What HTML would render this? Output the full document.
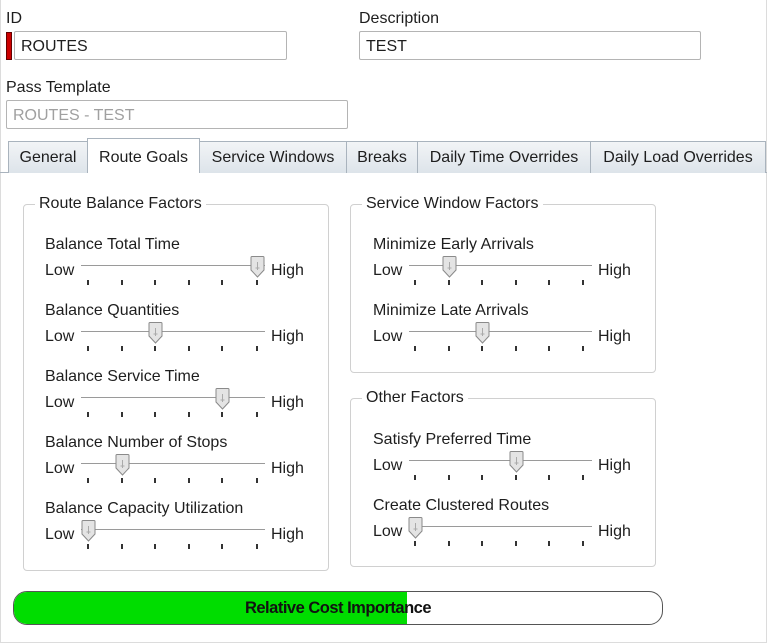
<!DOCTYPE html>
<html><head><style>
*{margin:0;padding:0;box-sizing:border-box}
body{width:768px;height:644px;background:#fff;font-family:"Liberation Sans",sans-serif;font-size:16px;color:#1e1e1e;position:relative;overflow:hidden}
.a{position:absolute;white-space:nowrap;margin-top:1px}
.inp{position:absolute;border:1px solid #b4b4b4;border-radius:2px;background:#fff;padding-left:6px;line-height:30px;height:29px}
.tab{position:absolute;top:141px;height:32px;border:1px solid #a9b3bd;border-bottom:none;background:linear-gradient(#f2f4f6,#dde4ea);text-align:center;line-height:32px}
.grp{position:absolute;border:1px solid #d0d0d0;border-radius:4px}
.gt{position:absolute;background:#fff;padding:0 4px;top:-11px;line-height:20px}
.trk{position:absolute;height:1px;background:#9a9a9a}
.tk{position:absolute;width:2px;height:5px;background:#333}
.th{position:absolute;width:15px;height:22px}
</style></head><body>
<div style="position:absolute;left:0;top:0;width:767px;height:643px;border:1px solid #dcdcdc;border-top:none"></div>
<div class="a" style="left:6px;top:9px">ID</div>
<div style="position:absolute;left:6px;top:32px;width:6px;height:28px;background:#c00;border:1px solid #600"></div>
<div class="inp" style="left:14px;top:31px;width:273px">ROUTES</div>
<div class="a" style="left:359px;top:9px">Description</div>
<div class="inp" style="left:359px;top:31px;width:342px">TEST</div>
<div class="a" style="left:6px;top:78px">Pass Template</div>
<div class="inp" style="left:6px;top:100px;width:342px;color:#a0a0a0">ROUTES - TEST</div>

<div style="position:absolute;left:0;top:172px;width:767px;height:1px;background:#a9b3bd"></div>
<div class="tab" style="left:8px;width:80px">General</div>
<div class="tab" style="left:87px;width:113px;top:138px;height:35px;background:#fff;line-height:37px">Route Goals</div>
<div class="tab" style="left:199px;width:148px">Service Windows</div>
<div class="tab" style="left:346px;width:72px">Breaks</div>
<div class="tab" style="left:417px;width:174px">Daily Time Overrides</div>
<div class="tab" style="left:590px;width:176px">Daily Load Overrides</div>
<div style="position:absolute;left:88px;top:172px;width:111px;height:2px;background:#fff"></div>

<div class="grp" style="left:23px;top:204px;width:306px;height:367px"><div class="gt" style="left:11px">Route Balance Factors</div></div>
<div class="grp" style="left:350px;top:204px;width:306px;height:169px"><div class="gt" style="left:11px">Service Window Factors</div></div>
<div class="grp" style="left:350px;top:398px;width:306px;height:169px"><div class="gt" style="left:11px">Other Factors</div></div>

<svg width="0" height="0" style="position:absolute"><defs><g id="t"><path d="M1 1.5 Q1 .5 2 .5 H13 Q14 .5 14 1.5 V14 L7.5 21 L1 14 Z" fill="#e4e4e4" stroke="#8a8a8a"/><path d="M7.5 6 V14 M5.5 12 H9.5" stroke="#aaa" fill="none"/></g></defs></svg>

<!-- left sliders -->
<div class="a" style="left:45px;top:235px">Balance Total Time</div>
<div class="a" style="left:45px;top:261px">Low</div><div class="a" style="left:271px;top:261px">High</div>
<div class="trk" style="left:81px;top:265px;width:184px"></div>
<div class="tk" style="left:87px;top:280px"></div><div class="tk" style="left:121px;top:280px"></div><div class="tk" style="left:154px;top:280px"></div><div class="tk" style="left:188px;top:280px"></div><div class="tk" style="left:221px;top:280px"></div><div class="tk" style="left:256px;top:280px"></div>
<svg class="th" style="left:250px;top:256px"><use href="#t"/></svg>

<div class="a" style="left:45px;top:301px">Balance Quantities</div>
<div class="a" style="left:45px;top:327px">Low</div><div class="a" style="left:271px;top:327px">High</div>
<div class="trk" style="left:81px;top:331px;width:184px"></div>
<div class="tk" style="left:87px;top:346px"></div><div class="tk" style="left:121px;top:346px"></div><div class="tk" style="left:154px;top:346px"></div><div class="tk" style="left:188px;top:346px"></div><div class="tk" style="left:221px;top:346px"></div><div class="tk" style="left:256px;top:346px"></div>
<svg class="th" style="left:148px;top:322px"><use href="#t"/></svg>

<div class="a" style="left:45px;top:367px">Balance Service Time</div>
<div class="a" style="left:45px;top:393px">Low</div><div class="a" style="left:271px;top:393px">High</div>
<div class="trk" style="left:81px;top:397px;width:184px"></div>
<div class="tk" style="left:87px;top:412px"></div><div class="tk" style="left:121px;top:412px"></div><div class="tk" style="left:154px;top:412px"></div><div class="tk" style="left:188px;top:412px"></div><div class="tk" style="left:221px;top:412px"></div><div class="tk" style="left:256px;top:412px"></div>
<svg class="th" style="left:215px;top:388px"><use href="#t"/></svg>

<div class="a" style="left:45px;top:433px">Balance Number of Stops</div>
<div class="a" style="left:45px;top:459px">Low</div><div class="a" style="left:271px;top:459px">High</div>
<div class="trk" style="left:81px;top:463px;width:184px"></div>
<div class="tk" style="left:87px;top:478px"></div><div class="tk" style="left:121px;top:478px"></div><div class="tk" style="left:154px;top:478px"></div><div class="tk" style="left:188px;top:478px"></div><div class="tk" style="left:221px;top:478px"></div><div class="tk" style="left:256px;top:478px"></div>
<svg class="th" style="left:115px;top:454px"><use href="#t"/></svg>

<div class="a" style="left:45px;top:499px">Balance Capacity Utilization</div>
<div class="a" style="left:45px;top:525px">Low</div><div class="a" style="left:271px;top:525px">High</div>
<div class="trk" style="left:81px;top:529px;width:184px"></div>
<div class="tk" style="left:87px;top:544px"></div><div class="tk" style="left:121px;top:544px"></div><div class="tk" style="left:154px;top:544px"></div><div class="tk" style="left:188px;top:544px"></div><div class="tk" style="left:221px;top:544px"></div><div class="tk" style="left:256px;top:544px"></div>
<svg class="th" style="left:81px;top:520px"><use href="#t"/></svg>

<!-- right sliders -->
<div class="a" style="left:373px;top:235px">Minimize Early Arrivals</div>
<div class="a" style="left:373px;top:261px">Low</div><div class="a" style="left:598px;top:261px">High</div>
<div class="trk" style="left:409px;top:265px;width:183px"></div>
<div class="tk" style="left:414px;top:280px"></div><div class="tk" style="left:448px;top:280px"></div><div class="tk" style="left:481px;top:280px"></div><div class="tk" style="left:515px;top:280px"></div><div class="tk" style="left:548px;top:280px"></div><div class="tk" style="left:582px;top:280px"></div>
<svg class="th" style="left:442px;top:256px"><use href="#t"/></svg>

<div class="a" style="left:373px;top:301px">Minimize Late Arrivals</div>
<div class="a" style="left:373px;top:327px">Low</div><div class="a" style="left:598px;top:327px">High</div>
<div class="trk" style="left:409px;top:331px;width:183px"></div>
<div class="tk" style="left:414px;top:346px"></div><div class="tk" style="left:448px;top:346px"></div><div class="tk" style="left:481px;top:346px"></div><div class="tk" style="left:515px;top:346px"></div><div class="tk" style="left:548px;top:346px"></div><div class="tk" style="left:582px;top:346px"></div>
<svg class="th" style="left:475px;top:322px"><use href="#t"/></svg>

<div class="a" style="left:373px;top:430px">Satisfy Preferred Time</div>
<div class="a" style="left:373px;top:456px">Low</div><div class="a" style="left:598px;top:456px">High</div>
<div class="trk" style="left:409px;top:460px;width:183px"></div>
<div class="tk" style="left:414px;top:475px"></div><div class="tk" style="left:448px;top:475px"></div><div class="tk" style="left:481px;top:475px"></div><div class="tk" style="left:515px;top:475px"></div><div class="tk" style="left:548px;top:475px"></div><div class="tk" style="left:582px;top:475px"></div>
<svg class="th" style="left:509px;top:451px"><use href="#t"/></svg>

<div class="a" style="left:373px;top:496px">Create Clustered Routes</div>
<div class="a" style="left:373px;top:522px">Low</div><div class="a" style="left:598px;top:522px">High</div>
<div class="trk" style="left:409px;top:526px;width:183px"></div>
<div class="tk" style="left:414px;top:541px"></div><div class="tk" style="left:448px;top:541px"></div><div class="tk" style="left:481px;top:541px"></div><div class="tk" style="left:515px;top:541px"></div><div class="tk" style="left:548px;top:541px"></div><div class="tk" style="left:582px;top:541px"></div>
<svg class="th" style="left:408px;top:517px"><use href="#t"/></svg>

<div style="position:absolute;left:13px;top:591px;width:650px;height:34px;border:1.5px solid #555;border-radius:14px;overflow:hidden;background:#fff">
<div style="position:absolute;left:0;top:0;width:393px;height:100%;background:#00dd00"></div>
<div style="position:absolute;left:0;top:0;width:100%;text-align:center;line-height:32px;font-weight:bold;font-size:16.5px;color:#111;letter-spacing:-0.5px">Relative Cost Importance</div>
</div>
</body></html>
